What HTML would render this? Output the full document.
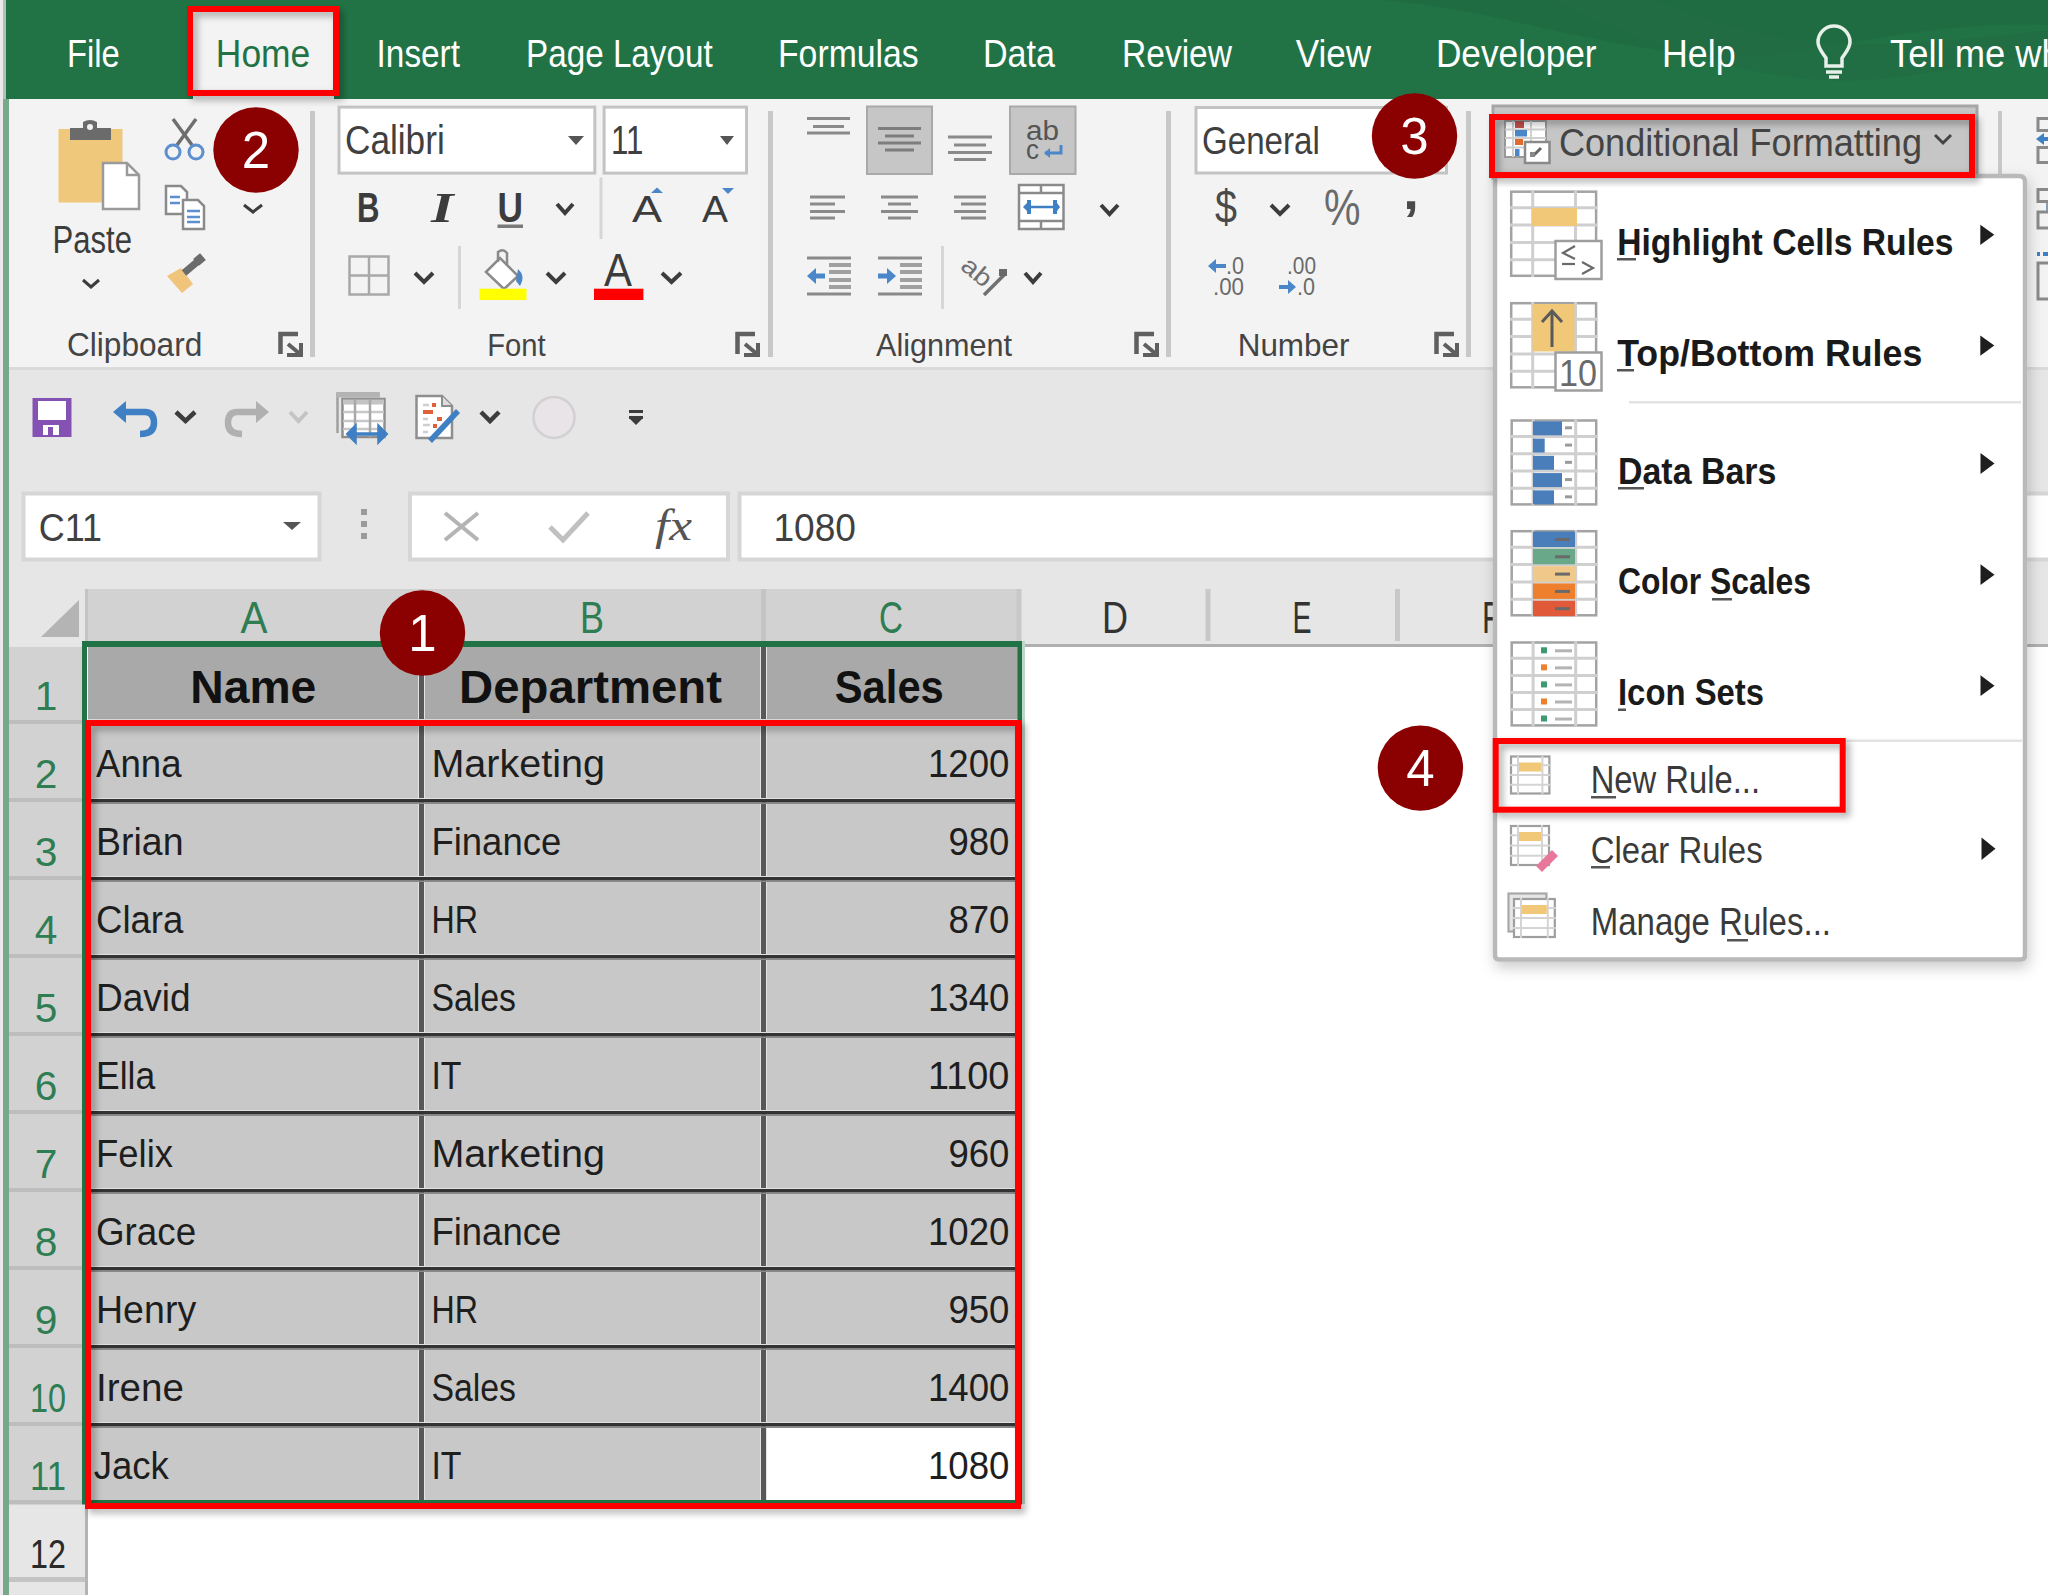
<!DOCTYPE html><html><head><meta charset="utf-8"><style>html,body{margin:0;padding:0;background:#fff;overflow:hidden}</style></head><body><svg width="2048" height="1595" viewBox="0 0 2048 1595" style="display:block;font-family:'Liberation Sans', sans-serif">
<defs>
<filter id="sh" x="-10%" y="-10%" width="130%" height="130%"><feDropShadow dx="4" dy="4" stdDeviation="3.5" flood-color="#000" flood-opacity="0.33"/></filter>
<filter id="sh2" x="-10%" y="-10%" width="130%" height="130%"><feDropShadow dx="2" dy="6" stdDeviation="7" flood-color="#000" flood-opacity="0.2"/></filter>
</defs>
<rect x="0" y="0" width="2048" height="1595" fill="#ffffff" />
<rect x="0" y="0" width="2048" height="99" fill="#217346" />
<path d="M1380 0 C1500 10 1560 40 1700 55 C1800 65 1900 20 2048 25 L2048 0 Z" fill="#1f6b41" opacity="0.9"/>
<path d="M1550 0 C1620 30 1700 70 1820 80 C1900 85 1980 60 2048 55 L2048 30 C1960 40 1880 50 1800 40 C1720 30 1660 0 1650 0 Z" fill="#226d44" opacity="0.8"/>
<text x="67" y="67" font-size="38.5" fill="#ffffff" textLength="52.8" lengthAdjust="spacingAndGlyphs" >File</text>
<text x="376.6" y="67" font-size="38.5" fill="#ffffff" textLength="83.4" lengthAdjust="spacingAndGlyphs" >Insert</text>
<text x="526" y="67" font-size="38.5" fill="#ffffff" textLength="186.7" lengthAdjust="spacingAndGlyphs" >Page Layout</text>
<text x="778" y="67" font-size="38.5" fill="#ffffff" textLength="140.7" lengthAdjust="spacingAndGlyphs" >Formulas</text>
<text x="983" y="67" font-size="38.5" fill="#ffffff" textLength="72" lengthAdjust="spacingAndGlyphs" >Data</text>
<text x="1122" y="67" font-size="38.5" fill="#ffffff" textLength="110" lengthAdjust="spacingAndGlyphs" >Review</text>
<text x="1295.7" y="67" font-size="38.5" fill="#ffffff" textLength="75.3" lengthAdjust="spacingAndGlyphs" >View</text>
<text x="1435.9" y="67" font-size="38.5" fill="#ffffff" textLength="160.7" lengthAdjust="spacingAndGlyphs" >Developer</text>
<text x="1662" y="67" font-size="38.5" fill="#ffffff" textLength="73.6" lengthAdjust="spacingAndGlyphs" >Help</text>
<text transform="translate(1890 67) scale(0.945 1)" x="0" y="0" font-size="38.5" fill="#ffffff">Tell me what you want to do</text>
<g fill="none" stroke="#e8f0ea" stroke-width="3.5"><path d="M1826 66 L1826 58 C1822 52 1818 48 1818 42 A16 16 0 1 1 1850 42 C1850 48 1846 52 1842 58 L1842 66 Z"/><line x1="1826" y1="72" x2="1842" y2="72"/><line x1="1829" y1="77" x2="1839" y2="77"/></g>
<rect x="0" y="0" width="3" height="1595" fill="#ebe7eb" />
<rect x="3" y="99" width="6" height="1496" fill="#78a88a" />
<rect x="3" y="0" width="3" height="99" fill="#a8c4b4" />
<rect x="9" y="99" width="2039" height="270" fill="#f3f3f3" />
<rect x="9" y="367" width="2039" height="3" fill="#dadada" />
<rect x="9" y="370" width="2039" height="220" fill="#e6e6e6" />
<rect x="193" y="12" width="141" height="88" fill="#f3f3f3" />
<rect x="190" y="9" width="146" height="84" fill="none" stroke="#ff0000" stroke-width="6" filter="url(#sh)"/>
<text x="215.8" y="67" font-size="38.5" fill="#217346" textLength="94.5" lengthAdjust="spacingAndGlyphs" >Home</text>
<rect x="58.5" y="129" width="64" height="73.5" fill="#f0c87c" />
<path d="M70 140 L70 128 L83 128 L83 122 Q90 118 97 122 L97 128 L111 128 L111 140 Z" fill="#6b6b6b"/>
<circle cx="90" cy="127" r="3" fill="#f3f3f3"/>
<path d="M103 163 L127 163 L139 175 L139 209 L103 209 Z" fill="#ffffff" stroke="#9a9a9a" stroke-width="2.5"/>
<path d="M127 163 L127 175 L139 175" fill="none" stroke="#9a9a9a" stroke-width="2.5"/>
<text x="52.5" y="253" font-size="39.2" fill="#3c3c3c" textLength="79.5" lengthAdjust="spacingAndGlyphs" >Paste</text>
<path d="M83 280 L91 287 L99 280" fill="none" stroke="#3c3c3c" stroke-width="3"/>
<g fill="none" stroke="#6e6e6e" stroke-width="3.5"><line x1="173" y1="119" x2="192" y2="145"/><line x1="196" y1="119" x2="177" y2="145"/></g>
<g fill="none" stroke="#5b8fd0" stroke-width="3"><circle cx="173" cy="152" r="7"/><circle cx="196" cy="152" r="7"/></g>
<g stroke="#8a8a8a" stroke-width="2.5" fill="#fff"><path d="M166 186 L181 186 L187 192 L187 214 L166 214 Z"/><path d="M183 200 L198 200 L204 206 L204 229 L183 229 Z"/></g>
<g stroke="#5b8fd0" stroke-width="2.5"><line x1="170" y1="197" x2="180" y2="197"/><line x1="170" y1="203" x2="180" y2="203"/><line x1="187" y1="211" x2="200" y2="211"/><line x1="187" y1="217" x2="200" y2="217"/><line x1="187" y1="222" x2="200" y2="222"/></g>
<path d="M244 205 L253 212 L262 205" fill="none" stroke="#3c3c3c" stroke-width="3"/>
<path d="M167 276 L181 268 L193 284 L182 293 Z" fill="#f0c47a"/>
<line x1="184" y1="273" x2="197" y2="262" stroke="#6b6b6b" stroke-width="7"/><rect x="195" y="255" width="9" height="9" fill="#6b6b6b" transform="rotate(-40 199.5 259.5)"/>
<text x="66.9" y="356" font-size="33.4" fill="#444444" textLength="135.4" lengthAdjust="spacingAndGlyphs" >Clipboard</text>
<g fill="none" stroke="#5f5f5f" stroke-width="4.5"><path d="M280.5 354 L280.5 334 L298 334"/><line x1="288" y1="344" x2="300" y2="354" stroke-width="4"/><path d="M301 343 L301 355 L287 355" stroke-width="4"/></g>
<rect x="310" y="111" width="5" height="246" fill="#c8c8c8" />
<rect x="339.0" y="107.1" width="255.79999999999995" height="66.0" fill="#ffffff" stroke="#c3c3c3" stroke-width="3"/>
<text x="345" y="154" font-size="40.0" fill="#404040" textLength="99.7" lengthAdjust="spacingAndGlyphs" >Calibri</text>
<path d="M568 136 L584 136 L576 145 Z" fill="#555"/>
<rect x="604.1" y="107.1" width="142.39999999999998" height="66.0" fill="#ffffff" stroke="#c3c3c3" stroke-width="3"/>
<text x="611" y="154" font-size="40.0" fill="#404040" textLength="32.5" lengthAdjust="spacingAndGlyphs" >11</text>
<path d="M720 136 L734 136 L727 145 Z" fill="#555"/>
<text x="357" y="222.4" font-size="42.7" fill="#3c3c3c" textLength="22.5" lengthAdjust="spacingAndGlyphs" font-weight="bold" >B</text>
<text x="431" y="222.4" font-size="43" fill="#3c3c3c" font-family="Liberation Serif" font-style="italic" font-weight="bold" textLength="22.6" lengthAdjust="spacingAndGlyphs">I</text>
<text x="497.5" y="222.4" font-size="42.7" fill="#3c3c3c" textLength="25.5" lengthAdjust="spacingAndGlyphs" font-weight="bold" >U</text>
<rect x="497.5" y="224.5" width="25.5" height="3.5" fill="#7a7a7a" />
<path d="M557 204 L565.0 213 L573 204" fill="none" stroke="#3c3c3c" stroke-width="4"/>
<rect x="599.5" y="177.5" width="3" height="61.5" fill="#d6d6d6" />
<text x="632" y="222.4" font-size="37.5" fill="#3c3c3c" textLength="30" lengthAdjust="spacingAndGlyphs" >A</text>
<path d="M651 193 L657 187.6 L663 193 Z" fill="#4a86c8"/>
<text x="702" y="222.4" font-size="37.5" fill="#3c3c3c" textLength="26" lengthAdjust="spacingAndGlyphs" >A</text>
<path d="M722 188 L734 188 L728 194 Z" fill="#4a86c8"/>
<g fill="none" stroke="#a8a8a8" stroke-width="2.5"><rect x="349.5" y="256.5" width="39" height="38"/><line x1="369" y1="256" x2="369" y2="295"/><line x1="349" y1="275.5" x2="389" y2="275.5"/></g>
<path d="M415 273 L424.0 282 L433 273" fill="none" stroke="#3c3c3c" stroke-width="4"/>
<rect x="458" y="246" width="3" height="63" fill="#d6d6d6" />
<path d="M486 272 L500 258 L518 276 L504 289 Z" fill="#fff" stroke="#8a8a8a" stroke-width="2.5"/>
<path d="M498 262 L498 252 Q503 248 507 253 L507 266" fill="none" stroke="#8a8a8a" stroke-width="2.5"/>
<path d="M518 269 Q526 276 520 286 L516 281 Z" fill="#4a86c8"/>
<rect x="479.5" y="288.7" width="47" height="11.3" fill="#ffff00" />
<path d="M547 273 L556.0 282 L565 273" fill="none" stroke="#3c3c3c" stroke-width="4"/>
<text x="604" y="286.4" font-size="45.6" fill="#3c3c3c" textLength="28" lengthAdjust="spacingAndGlyphs" >A</text>
<rect x="594" y="288.7" width="49.4" height="11.3" fill="#ff0000" />
<path d="M662 273 L671.5 282 L681 273" fill="none" stroke="#3c3c3c" stroke-width="4"/>
<text x="487.3" y="356" font-size="31.0" fill="#444444" textLength="58.4" lengthAdjust="spacingAndGlyphs" >Font</text>
<g fill="none" stroke="#5f5f5f" stroke-width="4.5"><path d="M737.5 354 L737.5 334 L755 334"/><line x1="745" y1="344" x2="757" y2="354" stroke-width="4"/><path d="M758 343 L758 355 L744 355" stroke-width="4"/></g>
<rect x="768" y="111" width="5" height="246" fill="#c8c8c8" />
<line x1="807" y1="118.5" x2="850" y2="118.5" stroke="#8a8a8a" stroke-width="3"/>
<line x1="813" y1="126.5" x2="844" y2="126.5" stroke="#8a8a8a" stroke-width="3"/>
<line x1="807" y1="133" x2="850" y2="133" stroke="#8a8a8a" stroke-width="3"/>
<rect x="867" y="106.5" width="65" height="67.5" fill="#c6c6c6" stroke="#a9a9a9" stroke-width="2"/>
<line x1="878" y1="128.5" x2="921" y2="128.5" stroke="#7d7d7d" stroke-width="3"/>
<line x1="885" y1="136" x2="914" y2="136" stroke="#7d7d7d" stroke-width="3"/>
<line x1="878" y1="143" x2="921" y2="143" stroke="#7d7d7d" stroke-width="3"/>
<line x1="885" y1="150" x2="914" y2="150" stroke="#7d7d7d" stroke-width="3"/>
<line x1="948" y1="137" x2="992" y2="137" stroke="#8a8a8a" stroke-width="3"/>
<line x1="954" y1="145" x2="986" y2="145" stroke="#8a8a8a" stroke-width="3"/>
<line x1="948" y1="152.5" x2="992" y2="152.5" stroke="#8a8a8a" stroke-width="3"/>
<line x1="954" y1="159.5" x2="986" y2="159.5" stroke="#8a8a8a" stroke-width="3"/>
<rect x="1010" y="106.5" width="65.5" height="67.5" fill="#c6c6c6" stroke="#a9a9a9" stroke-width="2"/>
<text x="1026" y="140" font-size="27" fill="#555" textLength="33" lengthAdjust="spacingAndGlyphs" >ab</text>
<text x="1026" y="159" font-size="27" fill="#555" textLength="13" lengthAdjust="spacingAndGlyphs" >c</text>
<path d="M1061 145 L1061 153 L1045 153" fill="none" stroke="#4a86c8" stroke-width="3"/><path d="M1044 153 L1050 148 L1050 158 Z" fill="#4a86c8"/>
<line x1="810" y1="197" x2="845" y2="197" stroke="#8a8a8a" stroke-width="3"/>
<line x1="810" y1="204" x2="835" y2="204" stroke="#8a8a8a" stroke-width="3"/>
<line x1="810" y1="211.5" x2="845" y2="211.5" stroke="#8a8a8a" stroke-width="3"/>
<line x1="810" y1="218" x2="835" y2="218" stroke="#8a8a8a" stroke-width="3"/>
<line x1="881" y1="197" x2="918" y2="197" stroke="#8a8a8a" stroke-width="3"/>
<line x1="888" y1="204" x2="911" y2="204" stroke="#8a8a8a" stroke-width="3"/>
<line x1="881" y1="211.5" x2="918" y2="211.5" stroke="#8a8a8a" stroke-width="3"/>
<line x1="888" y1="218" x2="911" y2="218" stroke="#8a8a8a" stroke-width="3"/>
<line x1="954" y1="197" x2="986" y2="197" stroke="#8a8a8a" stroke-width="3"/>
<line x1="961" y1="204" x2="986" y2="204" stroke="#8a8a8a" stroke-width="3"/>
<line x1="954" y1="211.5" x2="986" y2="211.5" stroke="#8a8a8a" stroke-width="3"/>
<line x1="961" y1="218" x2="986" y2="218" stroke="#8a8a8a" stroke-width="3"/>
<rect x="1019" y="185" width="44.5" height="44" fill="#fff"/>
<g fill="none" stroke="#8a8a8a" stroke-width="2.5"><rect x="1019" y="185" width="44.5" height="44"/><line x1="1019" y1="193" x2="1063" y2="193"/><line x1="1019" y1="221" x2="1063" y2="221"/><line x1="1041" y1="185" x2="1041" y2="193"/><line x1="1041" y1="221" x2="1041" y2="229"/></g>
<g stroke="#3f7fc4" fill="#3f7fc4"><line x1="1025" y1="207" x2="1058" y2="207" stroke-width="2.5"/><rect x="1027" y="200" width="4" height="14" stroke="none"/><rect x="1053" y="200" width="4" height="14" stroke="none"/><path d="M1023 207 L1027 203 L1027 211 Z" stroke="none"/><path d="M1060 207 L1057 203 L1057 211 Z" stroke="none"/></g>
<path d="M1101 205 L1109.5 214 L1118 205" fill="none" stroke="#3c3c3c" stroke-width="4"/>
<line x1="807" y1="258" x2="851" y2="258" stroke="#8a8a8a" stroke-width="3"/>
<line x1="807" y1="294" x2="851" y2="294" stroke="#8a8a8a" stroke-width="3"/>
<line x1="829" y1="265" x2="851" y2="265" stroke="#a0a0a0" stroke-width="4"/>
<line x1="829" y1="272" x2="851" y2="272" stroke="#a0a0a0" stroke-width="4"/>
<line x1="829" y1="280" x2="851" y2="280" stroke="#a0a0a0" stroke-width="4"/>
<line x1="829" y1="287" x2="851" y2="287" stroke="#a0a0a0" stroke-width="4"/>
<path d="M813 276 L825 276" stroke="#4a86c8" stroke-width="5"/><path d="M807 276 L816 268 L816 284 Z" fill="#4a86c8"/>
<line x1="878" y1="258" x2="922" y2="258" stroke="#8a8a8a" stroke-width="3"/>
<line x1="878" y1="294" x2="922" y2="294" stroke="#8a8a8a" stroke-width="3"/>
<line x1="900" y1="265" x2="922" y2="265" stroke="#a0a0a0" stroke-width="4"/>
<line x1="900" y1="272" x2="922" y2="272" stroke="#a0a0a0" stroke-width="4"/>
<line x1="900" y1="280" x2="922" y2="280" stroke="#a0a0a0" stroke-width="4"/>
<line x1="900" y1="287" x2="922" y2="287" stroke="#a0a0a0" stroke-width="4"/>
<path d="M878 276 L890 276" stroke="#4a86c8" stroke-width="5"/><path d="M896 276 L887 268 L887 284 Z" fill="#4a86c8"/>
<rect x="941" y="246" width="3" height="63" fill="#d6d6d6" />
<g transform="translate(978 272) rotate(40)"><text x="-17" y="9" font-size="25" fill="#707070" textLength="32" lengthAdjust="spacingAndGlyphs">ab</text></g>
<line x1="984" y1="295" x2="1005" y2="274" stroke="#707070" stroke-width="3.5"/><rect x="999" y="269" width="8" height="7" fill="#6a6a6a"/>
<path d="M1025 273 L1033.0 282 L1041 273" fill="none" stroke="#3c3c3c" stroke-width="4"/>
<text x="876" y="356" font-size="32.0" fill="#444444" textLength="136" lengthAdjust="spacingAndGlyphs" >Alignment</text>
<g fill="none" stroke="#5f5f5f" stroke-width="4.5"><path d="M1136.5 354 L1136.5 334 L1154 334"/><line x1="1144" y1="344" x2="1156" y2="354" stroke-width="4"/><path d="M1157 343 L1157 355 L1143 355" stroke-width="4"/></g>
<rect x="1166" y="111" width="5" height="246" fill="#c8c8c8" />
<rect x="1196.0" y="107.5" width="250.5" height="65.5" fill="#ffffff" stroke="#c3c3c3" stroke-width="3"/>
<text x="1202" y="154" font-size="39.2" fill="#404040" textLength="117.8" lengthAdjust="spacingAndGlyphs" >General</text>
<text x="1215" y="223" font-size="46.5" fill="#4a4a4a" textLength="22" lengthAdjust="spacingAndGlyphs" >$</text>
<path d="M1271 205 L1280.0 214 L1289 205" fill="none" stroke="#3c3c3c" stroke-width="4"/>
<text x="1324" y="225" font-size="50.4" fill="#6a6a6a" textLength="36.5" lengthAdjust="spacingAndGlyphs" >%</text>
<text x="1403" y="209" font-size="52" fill="#4a4a4a" textLength="16" lengthAdjust="spacingAndGlyphs" font-weight="bold" >,</text>
<text x="1226" y="274" font-size="24" fill="#6a6a6a" textLength="18" lengthAdjust="spacingAndGlyphs" >.0</text>
<text x="1213" y="295" font-size="24" fill="#6a6a6a" textLength="31" lengthAdjust="spacingAndGlyphs" >.00</text>
<path d="M1210 266 L1226 266" stroke="#4a86c8" stroke-width="4"/><path d="M1208 266 L1216 259 L1216 273 Z" fill="#4a86c8"/>
<text x="1287" y="274" font-size="24" fill="#6a6a6a" textLength="29" lengthAdjust="spacingAndGlyphs" >.00</text>
<text x="1297" y="295" font-size="24" fill="#6a6a6a" textLength="18" lengthAdjust="spacingAndGlyphs" >.0</text>
<path d="M1279 287 L1293 287" stroke="#4a86c8" stroke-width="4"/><path d="M1296 287 L1288 280 L1288 294 Z" fill="#4a86c8"/>
<text x="1237.7" y="356" font-size="32.0" fill="#444444" textLength="111.8" lengthAdjust="spacingAndGlyphs" >Number</text>
<g fill="none" stroke="#5f5f5f" stroke-width="4.5"><path d="M1436.5 354 L1436.5 334 L1454 334"/><line x1="1444" y1="344" x2="1456" y2="354" stroke-width="4"/><path d="M1457 343 L1457 355 L1443 355" stroke-width="4"/></g>
<rect x="1466" y="111" width="5" height="246" fill="#c8c8c8" />
<g fill="none" stroke="#8a8a8a" stroke-width="3"><rect x="2038" y="118.5" width="20" height="12"/><rect x="2038" y="147.5" width="20" height="15"/><rect x="2038" y="189.5" width="20" height="12"/><rect x="2038" y="212" width="20" height="16"/><rect x="2038" y="263" width="20" height="36"/></g>
<g fill="#3f7fc4"><path d="M2036 139 L2044 133 L2044 145 Z"/><rect x="2042" y="137" width="8" height="4"/><rect x="2037" y="252" width="3" height="4"/><rect x="2043" y="252" width="6" height="4"/></g><rect x="2046" y="203" width="4" height="8" fill="#8a9ab0"/>
<rect x="1998" y="111" width="4" height="64" fill="#c8c8c8" />
<rect x="32.5" y="398" width="39" height="39" fill="#8352b3"/><rect x="38" y="401" width="28" height="19" fill="#fff"/><rect x="43" y="425" width="16" height="10" fill="#fff"/><rect x="48" y="427" width="5" height="8" fill="#8352b3"/>
<path d="M122 412 L145 412 Q154 412 154 423 Q154 434 140 434" fill="none" stroke="#3f7fc4" stroke-width="6.5"/><path d="M113 412 L126 401 L126 423 Z" fill="#3f7fc4"/>
<path d="M176 412 L185.5 421 L195 412" fill="none" stroke="#3c3c3c" stroke-width="4.5"/>
<path d="M260 412 L237 412 Q228 412 228 423 Q228 434 242 434" fill="none" stroke="#b0b0b0" stroke-width="6.5"/><path d="M269 412 L256 401 L256 423 Z" fill="#b0b0b0"/>
<path d="M290 412 L298.5 421 L307 412" fill="none" stroke="#c4c4c4" stroke-width="4"/>
<path d="M337.5 433 L337.5 393.5 L379.5 393.5" fill="none" stroke="#a0a0a0" stroke-width="2.5"/><rect x="337" y="392.5" width="43" height="5" fill="#b4b4b4"/>
<rect x="342.5" y="399" width="42" height="38" fill="#fff" stroke="#8e8e8e" stroke-width="2.5"/>
<rect x="343" y="399.5" width="41" height="5" fill="#c4c4c4"/>
<g stroke="#c8c8c8" stroke-width="2.5"><line x1="343" y1="412" x2="384" y2="412"/><line x1="343" y1="421" x2="384" y2="421"/><line x1="343" y1="429" x2="384" y2="429"/></g><g stroke="#a8a8a8" stroke-width="2.5"><line x1="355" y1="399" x2="355" y2="437"/><line x1="370" y1="399" x2="370" y2="437"/></g>
<g stroke="#3f7fc4" fill="#3f7fc4" stroke-width="3.5"><line x1="352" y1="434" x2="379" y2="434"/><path d="M348 434 L355 427 L355 441 Z"/><path d="M386 434 L379 427 L379 441 Z"/></g>
<path d="M416.5 396 L442 396 L452 406 L452 438 L416.5 438 Z" fill="#fff" stroke="#8e8e8e" stroke-width="2.5"/><path d="M442 396 L442 406 L452 406" fill="#ddd" stroke="#8e8e8e" stroke-width="2"/>
<g stroke="#cfcfcf" stroke-width="2.5"><line x1="423" y1="405" x2="429" y2="405"/><line x1="423" y1="419" x2="428" y2="419"/><line x1="423" y1="425" x2="430" y2="425"/><line x1="423" y1="432" x2="428" y2="432"/></g>
<g fill="#e0603a"><rect x="432" y="403" width="4" height="4"/><rect x="423" y="410" width="10" height="4"/><rect x="437" y="417" width="5" height="4"/><rect x="433" y="424" width="4" height="4"/></g>
<line x1="430" y1="441" x2="458" y2="411" stroke="#3f7fc4" stroke-width="5.5"/>
<path d="M481 412 L490.0 421 L499 412" fill="none" stroke="#3c3c3c" stroke-width="4.5"/>
<circle cx="554" cy="417.4" r="20.5" fill="#e8e4e8" stroke="#d2d0d2" stroke-width="2.5"/>
<g fill="#3c3c3c"><rect x="629" y="410" width="14" height="3"/><rect x="629" y="416" width="14" height="3"/><path d="M630 419 L642 419 L636 425 Z"/></g>
<rect x="23.5" y="493.5" width="296" height="66" fill="#ffffff" stroke="#d6d6d6" stroke-width="4"/>
<text x="38.7" y="541" font-size="39.2" fill="#404040" textLength="63.3" lengthAdjust="spacingAndGlyphs" >C11</text>
<path d="M283 522 L301 522 L292 530 Z" fill="#555"/>
<g fill="#9a9a9a"><rect x="361" y="509" width="6" height="6"/><rect x="361" y="521" width="6" height="6"/><rect x="361" y="533" width="6" height="6"/></g>
<rect x="410" y="493.5" width="318" height="66" fill="#ffffff" stroke="#d6d6d6" stroke-width="4"/>
<g stroke="#b4b4b4" stroke-width="4"><line x1="445" y1="513" x2="478" y2="540"/><line x1="478" y1="513" x2="445" y2="540"/></g>
<path d="M550 527 L563 540 L588 513" fill="none" stroke="#c0c0c0" stroke-width="5"/>
<text x="655" y="540" font-size="44" fill="#555" font-family="Liberation Serif" font-style="italic" textLength="37" lengthAdjust="spacingAndGlyphs">fx</text>
<rect x="739.5" y="493.5" width="1320" height="66" fill="#ffffff" stroke="#d6d6d6" stroke-width="4"/>
<text x="773.4" y="541" font-size="39.2" fill="#404040" textLength="82.6" lengthAdjust="spacingAndGlyphs" >1080</text>
<rect x="9" y="589" width="2039" height="56" fill="#e6e6e6" />
<rect x="88" y="589" width="933" height="52" fill="#d2d2d2" />
<rect x="9" y="644" width="2039" height="3" fill="#afafaf" />
<path d="M41 637 L79 637 L79 600 Z" fill="#b4b4b4"/>
<rect x="419" y="589" width="5" height="52" fill="#c4c4c4" />
<rect x="761" y="589" width="5" height="52" fill="#c4c4c4" />
<rect x="1016.5" y="589" width="5" height="52" fill="#c8c8c8" />
<rect x="1205.5" y="589" width="5" height="52" fill="#c8c8c8" />
<rect x="1395" y="589" width="5" height="52" fill="#c8c8c8" />
<rect x="85" y="589" width="3" height="56" fill="#c4c4c4" />
<text x="254" y="633" font-size="43.6" fill="#2f7d52" textLength="27" lengthAdjust="spacingAndGlyphs" text-anchor="middle" >A</text>
<text x="592" y="633" font-size="43.6" fill="#2f7d52" textLength="24" lengthAdjust="spacingAndGlyphs" text-anchor="middle" >B</text>
<text x="891" y="633" font-size="43.6" fill="#2f7d52" textLength="24" lengthAdjust="spacingAndGlyphs" text-anchor="middle" >C</text>
<text x="1115" y="633" font-size="43.6" fill="#333333" textLength="26" lengthAdjust="spacingAndGlyphs" text-anchor="middle" >D</text>
<text x="1302" y="633" font-size="43.6" fill="#333333" textLength="19" lengthAdjust="spacingAndGlyphs" text-anchor="middle" >E</text>
<text x="1482" y="633" font-size="43.6" fill="#333333" textLength="19" lengthAdjust="spacingAndGlyphs" >F</text>
<rect x="9" y="644" width="76" height="951" fill="#e6e6e6" />
<rect x="9" y="647" width="73" height="858" fill="#d2d2d2" />
<rect x="85" y="1505" width="3" height="90" fill="#b4b4b4" />
<rect x="9" y="720" width="73" height="4" fill="#bdbdbd" />
<rect x="9" y="798" width="73" height="4" fill="#bdbdbd" />
<rect x="9" y="876" width="73" height="4" fill="#bdbdbd" />
<rect x="9" y="954" width="73" height="4" fill="#bdbdbd" />
<rect x="9" y="1032" width="73" height="4" fill="#bdbdbd" />
<rect x="9" y="1110" width="73" height="4" fill="#bdbdbd" />
<rect x="9" y="1188" width="73" height="4" fill="#bdbdbd" />
<rect x="9" y="1266" width="73" height="4" fill="#bdbdbd" />
<rect x="9" y="1344" width="73" height="4" fill="#bdbdbd" />
<rect x="9" y="1422" width="73" height="4" fill="#bdbdbd" />
<rect x="9" y="1500" width="73" height="4" fill="#bdbdbd" />
<rect x="9" y="1577" width="76" height="5" fill="#c4c4c4" />
<text x="46" y="710" font-size="40.7" fill="#2f7d52" text-anchor="middle" >1</text>
<text x="46" y="788" font-size="40.7" fill="#2f7d52" text-anchor="middle" >2</text>
<text x="46" y="866" font-size="40.7" fill="#2f7d52" text-anchor="middle" >3</text>
<text x="46" y="944" font-size="40.7" fill="#2f7d52" text-anchor="middle" >4</text>
<text x="46" y="1022" font-size="40.7" fill="#2f7d52" text-anchor="middle" >5</text>
<text x="46" y="1100" font-size="40.7" fill="#2f7d52" text-anchor="middle" >6</text>
<text x="46" y="1178" font-size="40.7" fill="#2f7d52" text-anchor="middle" >7</text>
<text x="46" y="1256" font-size="40.7" fill="#2f7d52" text-anchor="middle" >8</text>
<text x="46" y="1334" font-size="40.7" fill="#2f7d52" text-anchor="middle" >9</text>
<text x="48" y="1412" font-size="40.7" fill="#2f7d52" textLength="36" lengthAdjust="spacingAndGlyphs" text-anchor="middle" >10</text>
<text x="48" y="1490" font-size="40.7" fill="#2f7d52" textLength="36" lengthAdjust="spacingAndGlyphs" text-anchor="middle" >11</text>
<text x="48" y="1568" font-size="40.7" fill="#2a2a2a" textLength="36" lengthAdjust="spacingAndGlyphs" text-anchor="middle" >12</text>
<rect x="88" y="647" width="930" height="74" fill="#a9a9a9" />
<rect x="88" y="721" width="930" height="780" fill="#c8c8c8" />
<rect x="766" y="1427" width="250" height="74" fill="#ffffff" />
<rect x="418" y="647" width="7" height="854" fill="#e4e4e4" />
<rect x="419" y="647" width="5" height="854" fill="#585858" />
<rect x="760" y="647" width="7" height="854" fill="#e4e4e4" />
<rect x="761" y="647" width="5" height="854" fill="#585858" />
<rect x="88" y="798" width="930" height="2" fill="#e0e0e0" />
<rect x="88" y="799" width="930" height="3.5" fill="#333333" />
<rect x="88" y="802.5" width="930" height="1.5" fill="#8a8a8a" />
<rect x="88" y="876" width="930" height="2" fill="#e0e0e0" />
<rect x="88" y="877" width="930" height="3.5" fill="#333333" />
<rect x="88" y="880.5" width="930" height="1.5" fill="#8a8a8a" />
<rect x="88" y="954" width="930" height="2" fill="#e0e0e0" />
<rect x="88" y="955" width="930" height="3.5" fill="#333333" />
<rect x="88" y="958.5" width="930" height="1.5" fill="#8a8a8a" />
<rect x="88" y="1032" width="930" height="2" fill="#e0e0e0" />
<rect x="88" y="1033" width="930" height="3.5" fill="#333333" />
<rect x="88" y="1036.5" width="930" height="1.5" fill="#8a8a8a" />
<rect x="88" y="1110" width="930" height="2" fill="#e0e0e0" />
<rect x="88" y="1111" width="930" height="3.5" fill="#333333" />
<rect x="88" y="1114.5" width="930" height="1.5" fill="#8a8a8a" />
<rect x="88" y="1188" width="930" height="2" fill="#e0e0e0" />
<rect x="88" y="1189" width="930" height="3.5" fill="#333333" />
<rect x="88" y="1192.5" width="930" height="1.5" fill="#8a8a8a" />
<rect x="88" y="1266" width="930" height="2" fill="#e0e0e0" />
<rect x="88" y="1267" width="930" height="3.5" fill="#333333" />
<rect x="88" y="1270.5" width="930" height="1.5" fill="#8a8a8a" />
<rect x="88" y="1344" width="930" height="2" fill="#e0e0e0" />
<rect x="88" y="1345" width="930" height="3.5" fill="#333333" />
<rect x="88" y="1348.5" width="930" height="1.5" fill="#8a8a8a" />
<rect x="88" y="1422" width="930" height="2" fill="#e0e0e0" />
<rect x="88" y="1423" width="930" height="3.5" fill="#333333" />
<rect x="88" y="1426.5" width="930" height="1.5" fill="#8a8a8a" />
<rect x="88" y="719" width="930" height="2" fill="#e0e0e0" />
<text x="96" y="777" font-size="39.2" fill="#1e1e1e" textLength="85.6" lengthAdjust="spacingAndGlyphs" >Anna</text>
<text x="431.4" y="777" font-size="39.2" fill="#1e1e1e" textLength="173.6" lengthAdjust="spacingAndGlyphs" >Marketing</text>
<text x="927.9" y="777" font-size="39.2" fill="#1e1e1e" textLength="81.5" lengthAdjust="spacingAndGlyphs" >1200</text>
<text x="96" y="855" font-size="39.2" fill="#1e1e1e" textLength="87.5" lengthAdjust="spacingAndGlyphs" >Brian</text>
<text x="431.4" y="855" font-size="39.2" fill="#1e1e1e" textLength="129.9" lengthAdjust="spacingAndGlyphs" >Finance</text>
<text x="948.4" y="855" font-size="39.2" fill="#1e1e1e" textLength="61" lengthAdjust="spacingAndGlyphs" >980</text>
<text x="96" y="933" font-size="39.2" fill="#1e1e1e" textLength="87.4" lengthAdjust="spacingAndGlyphs" >Clara</text>
<text x="431.4" y="933" font-size="39.2" fill="#1e1e1e" textLength="46.5" lengthAdjust="spacingAndGlyphs" >HR</text>
<text x="948.4" y="933" font-size="39.2" fill="#1e1e1e" textLength="61" lengthAdjust="spacingAndGlyphs" >870</text>
<text x="96" y="1011" font-size="39.2" fill="#1e1e1e" textLength="94.7" lengthAdjust="spacingAndGlyphs" >David</text>
<text x="431.4" y="1011" font-size="39.2" fill="#1e1e1e" textLength="84.6" lengthAdjust="spacingAndGlyphs" >Sales</text>
<text x="927.9" y="1011" font-size="39.2" fill="#1e1e1e" textLength="81.5" lengthAdjust="spacingAndGlyphs" >1340</text>
<text x="96" y="1089" font-size="39.2" fill="#1e1e1e" textLength="59.2" lengthAdjust="spacingAndGlyphs" >Ella</text>
<text x="431.4" y="1089" font-size="39.2" fill="#1e1e1e" textLength="30.1" lengthAdjust="spacingAndGlyphs" >IT</text>
<text x="927.9" y="1089" font-size="39.2" fill="#1e1e1e" textLength="81.5" lengthAdjust="spacingAndGlyphs" >1100</text>
<text x="96" y="1167" font-size="39.2" fill="#1e1e1e" textLength="77" lengthAdjust="spacingAndGlyphs" >Felix</text>
<text x="431.4" y="1167" font-size="39.2" fill="#1e1e1e" textLength="173.6" lengthAdjust="spacingAndGlyphs" >Marketing</text>
<text x="948.4" y="1167" font-size="39.2" fill="#1e1e1e" textLength="61" lengthAdjust="spacingAndGlyphs" >960</text>
<text x="96" y="1245" font-size="39.2" fill="#1e1e1e" textLength="100.2" lengthAdjust="spacingAndGlyphs" >Grace</text>
<text x="431.4" y="1245" font-size="39.2" fill="#1e1e1e" textLength="129.9" lengthAdjust="spacingAndGlyphs" >Finance</text>
<text x="927.9" y="1245" font-size="39.2" fill="#1e1e1e" textLength="81.5" lengthAdjust="spacingAndGlyphs" >1020</text>
<text x="96" y="1323" font-size="39.2" fill="#1e1e1e" textLength="100.2" lengthAdjust="spacingAndGlyphs" >Henry</text>
<text x="431.4" y="1323" font-size="39.2" fill="#1e1e1e" textLength="46.5" lengthAdjust="spacingAndGlyphs" >HR</text>
<text x="948.4" y="1323" font-size="39.2" fill="#1e1e1e" textLength="61" lengthAdjust="spacingAndGlyphs" >950</text>
<text x="96" y="1401" font-size="39.2" fill="#1e1e1e" textLength="87.9" lengthAdjust="spacingAndGlyphs" >Irene</text>
<text x="431.4" y="1401" font-size="39.2" fill="#1e1e1e" textLength="84.6" lengthAdjust="spacingAndGlyphs" >Sales</text>
<text x="927.9" y="1401" font-size="39.2" fill="#1e1e1e" textLength="81.5" lengthAdjust="spacingAndGlyphs" >1400</text>
<text x="93.7" y="1479" font-size="39.2" fill="#1e1e1e" textLength="75.2" lengthAdjust="spacingAndGlyphs" >Jack</text>
<text x="431.4" y="1479" font-size="39.2" fill="#1e1e1e" textLength="30.1" lengthAdjust="spacingAndGlyphs" >IT</text>
<text x="927.9" y="1479" font-size="39.2" fill="#1e1e1e" textLength="81.5" lengthAdjust="spacingAndGlyphs" >1080</text>
<text x="190.3" y="702.7" font-size="46.5" fill="#111111" textLength="126" lengthAdjust="spacingAndGlyphs" font-weight="bold" >Name</text>
<text x="459" y="702.7" font-size="46.5" fill="#111111" textLength="263" lengthAdjust="spacingAndGlyphs" font-weight="bold" >Department</text>
<text x="834.8" y="702.7" font-size="46.5" fill="#111111" textLength="109" lengthAdjust="spacingAndGlyphs" font-weight="bold" >Sales</text>
<rect x="82" y="641" width="6" height="6" fill="#217346" />
<rect x="82" y="641" width="940" height="6" fill="#217346" />
<rect x="1017.5" y="641" width="4.5" height="863" fill="#217346" />
<rect x="1022" y="641" width="3" height="863" fill="#bcd8c8" />
<rect x="82" y="1500" width="940" height="4.5" fill="#217346" />
<rect x="82" y="641" width="5" height="863" fill="#217346" />
<rect x="88" y="723" width="930" height="783" fill="none" stroke="#ff0000" stroke-width="6" filter="url(#sh)"/>
<rect x="1493" y="106" width="484" height="72" fill="#c6c6c6" stroke="#a6a6a6" stroke-width="3"/>
<rect x="1505" y="121" width="41" height="36" fill="#fff" stroke="#9a9a9a" stroke-width="2"/><g stroke="#d0d0d0" stroke-width="2"><line x1="1505" y1="129.5" x2="1546" y2="129.5"/><line x1="1505" y1="138" x2="1546" y2="138"/><line x1="1505" y1="147.5" x2="1546" y2="147.5"/><line x1="1513" y1="121" x2="1513" y2="157"/><line x1="1531" y1="121" x2="1531" y2="157"/></g><rect x="1515" y="121" width="9" height="7" fill="#c0504d"/><rect x="1515" y="130" width="12" height="6.5" fill="#4a86c8"/><rect x="1515" y="139" width="8" height="6" fill="#e06a2c"/><rect x="1515" y="149" width="4.5" height="7" fill="#4a86c8"/><rect x="1525" y="142" width="24.5" height="21" fill="#fff" stroke="#8a8a8a" stroke-width="2.5"/><path d="M1533 156 L1541 148" stroke="#666" stroke-width="3"/><rect x="1530" y="152" width="5" height="5" fill="#888"/>
<text x="1559" y="156" font-size="39.2" fill="#444444" textLength="363" lengthAdjust="spacingAndGlyphs" >Conditional Formatting</text>
<path d="M1935 135 L1943.0 143 L1951 135" fill="none" stroke="#444" stroke-width="3"/>
<path d="M1495 176 L2019 176 Q2025 176 2025 182 L2025 955.5 Q2025 959.5 2021 959.5 L1499 959.5 Q1495 959.5 1495 955.5 Z" fill="#ffffff" stroke="#b9b9b9" stroke-width="4.5" filter="url(#sh2)"/>
<rect x="1492" y="117" width="480" height="58" fill="none" stroke="#ff0000" stroke-width="6" filter="url(#sh)"/>
<rect x="1511.2" y="191.7" width="84.89999999999995" height="84.1" fill="#fff" stroke="#a3a3a3" stroke-width="2.5"/>
<line x1="1532.698" y1="190.5" x2="1532.698" y2="277" stroke="#cfcfcf" stroke-width="3"/>
<line x1="1575.475" y1="190.5" x2="1575.475" y2="277" stroke="#cfcfcf" stroke-width="3"/>
<line x1="1510" y1="207.8" x2="1597.3" y2="207.8" stroke="#cfcfcf" stroke-width="3"/>
<line x1="1510" y1="225.1" x2="1597.3" y2="225.1" stroke="#cfcfcf" stroke-width="3"/>
<line x1="1510" y1="242.4" x2="1597.3" y2="242.4" stroke="#cfcfcf" stroke-width="3"/>
<line x1="1510" y1="259.7" x2="1597.3" y2="259.7" stroke="#cfcfcf" stroke-width="3"/>
<rect x="1532" y="208" width="45" height="18" fill="#f0c878" />
<rect x="1555.5" y="241" width="46" height="38" fill="#fff" stroke="#9e9e9e" stroke-width="2.5"/>
<g fill="none" stroke="#6a6a6a" stroke-width="2.2"><path d="M1575 246 L1563 253 L1575 259"/><line x1="1562" y1="264" x2="1575" y2="264"/><path d="M1582 262 L1593 268 L1582 274"/></g>
<text x="1617.2" y="254.8" font-size="37.8" fill="#1a1a1a" textLength="336.2" lengthAdjust="spacingAndGlyphs" font-weight="bold" >Highlight Cells Rules</text>
<rect x="1617" y="258" width="19" height="2.5" fill="#555" />
<path d="M1980.3 224.7 L1994.3 234.85 L1980.3 245 Z" fill="#1e1e1e"/>
<rect x="1511.2" y="303.2" width="84.89999999999995" height="84.1" fill="#fff" stroke="#a3a3a3" stroke-width="2.5"/>
<line x1="1532.698" y1="302" x2="1532.698" y2="388.5" stroke="#cfcfcf" stroke-width="3"/>
<line x1="1575.475" y1="302" x2="1575.475" y2="388.5" stroke="#cfcfcf" stroke-width="3"/>
<line x1="1510" y1="319.3" x2="1597.3" y2="319.3" stroke="#cfcfcf" stroke-width="3"/>
<line x1="1510" y1="336.6" x2="1597.3" y2="336.6" stroke="#cfcfcf" stroke-width="3"/>
<line x1="1510" y1="353.9" x2="1597.3" y2="353.9" stroke="#cfcfcf" stroke-width="3"/>
<line x1="1510" y1="371.2" x2="1597.3" y2="371.2" stroke="#cfcfcf" stroke-width="3"/>
<rect x="1532.5" y="304" width="42" height="47.5" fill="#f0c878" />
<g stroke="#5a5a5a" stroke-width="3" fill="none"><line x1="1552" y1="313" x2="1552" y2="347"/><path d="M1542 322 L1552 311 L1562 322"/></g>
<rect x="1555.5" y="352.5" width="46" height="38" fill="#fff" stroke="#9e9e9e" stroke-width="2.5"/>
<text x="1559" y="386" font-size="36" fill="#6a6a6a" textLength="38" lengthAdjust="spacingAndGlyphs" >10</text>
<text x="1617.2" y="365.6" font-size="37.8" fill="#1a1a1a" textLength="305.1" lengthAdjust="spacingAndGlyphs" font-weight="bold" >Top/Bottom Rules</text>
<rect x="1617" y="369" width="17" height="2.5" fill="#555" />
<path d="M1980.3 335.4 L1994.3 345.6 L1980.3 355.8 Z" fill="#1e1e1e"/>
<rect x="1629" y="401" width="392" height="2.5" fill="#e3e3e3" />
<rect x="1511.7" y="420.5" width="84.50000000000009" height="83.9" fill="#fff" stroke="#a3a3a3" stroke-width="2.5"/>
<line x1="1533.094" y1="419.3" x2="1533.094" y2="505.6" stroke="#cfcfcf" stroke-width="3"/>
<line x1="1575.6750000000002" y1="419.3" x2="1575.6750000000002" y2="505.6" stroke="#cfcfcf" stroke-width="3"/>
<line x1="1510.5" y1="436.56" x2="1597.4" y2="436.56" stroke="#cfcfcf" stroke-width="3"/>
<line x1="1510.5" y1="453.82" x2="1597.4" y2="453.82" stroke="#cfcfcf" stroke-width="3"/>
<line x1="1510.5" y1="471.08000000000004" x2="1597.4" y2="471.08000000000004" stroke="#cfcfcf" stroke-width="3"/>
<line x1="1510.5" y1="488.34000000000003" x2="1597.4" y2="488.34000000000003" stroke="#cfcfcf" stroke-width="3"/>
<rect x="1533" y="421.3" width="29" height="14" fill="#4a7ebb" />
<rect x="1565" y="426.3" width="7" height="3" fill="#9a9a9a" />
<rect x="1533" y="438.56" width="11.700000000000045" height="14" fill="#4a7ebb" />
<rect x="1565" y="443.56" width="7" height="3" fill="#9a9a9a" />
<rect x="1533" y="455.82" width="21" height="14" fill="#4a7ebb" />
<rect x="1565" y="460.82" width="7" height="3" fill="#9a9a9a" />
<rect x="1533" y="473.08" width="29" height="14" fill="#4a7ebb" />
<rect x="1565" y="478.08" width="7" height="3" fill="#9a9a9a" />
<rect x="1533" y="490.34000000000003" width="21" height="14" fill="#4a7ebb" />
<rect x="1565" y="495.34000000000003" width="7" height="3" fill="#9a9a9a" />
<text x="1618" y="483.5" font-size="37.8" fill="#1a1a1a" textLength="158.4" lengthAdjust="spacingAndGlyphs" font-weight="bold" >Data Bars</text>
<rect x="1618" y="487" width="26" height="2.5" fill="#555" />
<path d="M1980.5 453 L1994.5 463.5 L1980.5 474 Z" fill="#1e1e1e"/>
<rect x="1511.7" y="531.2" width="84.50000000000009" height="84.1" fill="#fff" stroke="#a3a3a3" stroke-width="2.5"/>
<line x1="1533.094" y1="530" x2="1533.094" y2="616.5" stroke="#cfcfcf" stroke-width="3"/>
<line x1="1575.6750000000002" y1="530" x2="1575.6750000000002" y2="616.5" stroke="#cfcfcf" stroke-width="3"/>
<line x1="1510.5" y1="547.3" x2="1597.4" y2="547.3" stroke="#cfcfcf" stroke-width="3"/>
<line x1="1510.5" y1="564.6" x2="1597.4" y2="564.6" stroke="#cfcfcf" stroke-width="3"/>
<line x1="1510.5" y1="581.9" x2="1597.4" y2="581.9" stroke="#cfcfcf" stroke-width="3"/>
<line x1="1510.5" y1="599.2" x2="1597.4" y2="599.2" stroke="#cfcfcf" stroke-width="3"/>
<rect x="1533" y="531.5" width="42" height="15.5" fill="#4a7ebb" />
<rect x="1555" y="538.0" width="15" height="3" fill="#6a6a6a" />
<rect x="1533" y="548.8" width="42" height="15.5" fill="#6aa88a" />
<rect x="1555" y="555.3" width="15" height="3" fill="#6a6a6a" />
<rect x="1533" y="566.1" width="42" height="15.5" fill="#f0c88a" />
<rect x="1555" y="572.6" width="15" height="3" fill="#6a6a6a" />
<rect x="1533" y="583.4" width="42" height="15.5" fill="#ee7f2d" />
<rect x="1555" y="589.9" width="15" height="3" fill="#6a6a6a" />
<rect x="1533" y="600.7" width="42" height="15.5" fill="#e05a3a" />
<rect x="1555" y="607.2" width="15" height="3" fill="#6a6a6a" />
<text x="1618" y="594" font-size="37.8" fill="#1a1a1a" textLength="193" lengthAdjust="spacingAndGlyphs" font-weight="bold" >Color Scales</text>
<rect x="1712" y="598" width="20" height="2.5" fill="#555" />
<path d="M1980.5 564.3 L1994.5 574.65 L1980.5 585 Z" fill="#1e1e1e"/>
<rect x="1511.7" y="642.5" width="84.50000000000009" height="82.90000000000006" fill="#fff" stroke="#a3a3a3" stroke-width="2.5"/>
<line x1="1533.094" y1="641.3" x2="1533.094" y2="726.6" stroke="#cfcfcf" stroke-width="3"/>
<line x1="1575.6750000000002" y1="641.3" x2="1575.6750000000002" y2="726.6" stroke="#cfcfcf" stroke-width="3"/>
<line x1="1510.5" y1="658.36" x2="1597.4" y2="658.36" stroke="#cfcfcf" stroke-width="3"/>
<line x1="1510.5" y1="675.42" x2="1597.4" y2="675.42" stroke="#cfcfcf" stroke-width="3"/>
<line x1="1510.5" y1="692.48" x2="1597.4" y2="692.48" stroke="#cfcfcf" stroke-width="3"/>
<line x1="1510.5" y1="709.54" x2="1597.4" y2="709.54" stroke="#cfcfcf" stroke-width="3"/>
<rect x="1541" y="647.3" width="6" height="6" fill="#3d9a70" />
<rect x="1555" y="649.3" width="17" height="3" fill="#b4b4b4" />
<rect x="1541" y="664.3599999999999" width="6" height="6" fill="#ee7f2d" />
<rect x="1555" y="666.3599999999999" width="17" height="3" fill="#b4b4b4" />
<rect x="1541" y="681.42" width="6" height="6" fill="#3d9a70" />
<rect x="1555" y="683.42" width="17" height="3" fill="#b4b4b4" />
<rect x="1541" y="698.4799999999999" width="6" height="6" fill="#ee7f2d" />
<rect x="1555" y="700.4799999999999" width="17" height="3" fill="#b4b4b4" />
<rect x="1541" y="715.54" width="6" height="6" fill="#3d9a70" />
<rect x="1555" y="717.54" width="17" height="3" fill="#b4b4b4" />
<text x="1618" y="704.8" font-size="37.8" fill="#1a1a1a" textLength="146" lengthAdjust="spacingAndGlyphs" font-weight="bold" >Icon Sets</text>
<rect x="1618" y="708.5" width="8" height="2.5" fill="#555" />
<path d="M1980.5 675.3 L1994.5 685.65 L1980.5 696 Z" fill="#1e1e1e"/>
<rect x="1500" y="739.5" width="522" height="2.5" fill="#e3e3e3" />
<rect x="1511" y="756.5" width="38.40000000000009" height="37.0" fill="#fff" stroke="#9e9e9e" stroke-width="2.2"/>
<line x1="1510" y1="765.25" x2="1550.4" y2="765.25" stroke="#d4d4d4" stroke-width="2"/>
<line x1="1510" y1="775.0" x2="1550.4" y2="775.0" stroke="#d4d4d4" stroke-width="2"/>
<line x1="1510" y1="784.75" x2="1550.4" y2="784.75" stroke="#d4d4d4" stroke-width="2"/>
<line x1="1518" y1="755.5" x2="1518" y2="794.5" stroke="#d4d4d4" stroke-width="2"/>
<line x1="1542.4" y1="755.5" x2="1542.4" y2="794.5" stroke="#d4d4d4" stroke-width="2"/>
<rect x="1519" y="762.5" width="22.40000000000009" height="9" fill="#f0c878" />
<text x="1590.7" y="793" font-size="38.8" fill="#3a3a3a" textLength="169.3" lengthAdjust="spacingAndGlyphs" >New Rule...</text>
<rect x="1591" y="796" width="25" height="2.5" fill="#555" />
<rect x="1495.7" y="741" width="347" height="68.7" fill="none" stroke="#ff0000" stroke-width="6" filter="url(#sh)"/>
<rect x="1511" y="826" width="38" height="39" fill="#fff" stroke="#9e9e9e" stroke-width="2.2"/>
<line x1="1510" y1="835.25" x2="1550" y2="835.25" stroke="#d4d4d4" stroke-width="2"/>
<line x1="1510" y1="845.5" x2="1550" y2="845.5" stroke="#d4d4d4" stroke-width="2"/>
<line x1="1510" y1="855.75" x2="1550" y2="855.75" stroke="#d4d4d4" stroke-width="2"/>
<line x1="1518" y1="825" x2="1518" y2="866" stroke="#d4d4d4" stroke-width="2"/>
<line x1="1542" y1="825" x2="1542" y2="866" stroke="#d4d4d4" stroke-width="2"/>
<rect x="1519" y="832" width="22" height="9" fill="#f0c878" />
<path d="M1536 866 L1552 850 L1558 856 L1542 872 Z" fill="#e8789a"/>
<text x="1590.7" y="863" font-size="37.2" fill="#3a3a3a" textLength="171.9" lengthAdjust="spacingAndGlyphs" >Clear Rules</text>
<rect x="1591" y="866" width="19" height="2.5" fill="#555" />
<path d="M1981.5 837.4 L1995.5 848.7 L1981.5 860 Z" fill="#1e1e1e"/>
<rect x="1508.5" y="893.5" width="38" height="38" fill="#e6e6e6" stroke="#a8a8a8" stroke-width="2.2"/>
<rect x="1514" y="899" width="40.799999999999955" height="38" fill="#fff" stroke="#9e9e9e" stroke-width="2.2"/>
<line x1="1513" y1="908.0" x2="1555.8" y2="908.0" stroke="#d4d4d4" stroke-width="2"/>
<line x1="1513" y1="918.0" x2="1555.8" y2="918.0" stroke="#d4d4d4" stroke-width="2"/>
<line x1="1513" y1="928.0" x2="1555.8" y2="928.0" stroke="#d4d4d4" stroke-width="2"/>
<line x1="1521" y1="898" x2="1521" y2="938" stroke="#d4d4d4" stroke-width="2"/>
<line x1="1547.8" y1="898" x2="1547.8" y2="938" stroke="#d4d4d4" stroke-width="2"/>
<rect x="1522" y="905" width="24.799999999999955" height="9" fill="#f0c878" />
<text x="1590.7" y="935.4" font-size="39.0" fill="#3a3a3a" textLength="240.3" lengthAdjust="spacingAndGlyphs" >Manage Rules...</text>
<rect x="1727" y="939" width="21" height="2.5" fill="#555" />
<circle cx="422.5" cy="633" r="42.7" fill="#8b0000"/>
<text x="422.5" y="650.8" font-size="51" fill="#ffffff" text-anchor="middle" >1</text>
<circle cx="256" cy="150" r="42.7" fill="#8b0000"/>
<text x="256" y="167.8" font-size="51" fill="#ffffff" text-anchor="middle" >2</text>
<circle cx="1414.5" cy="136" r="42.7" fill="#8b0000"/>
<text x="1414.5" y="153.8" font-size="51" fill="#ffffff" text-anchor="middle" >3</text>
<circle cx="1420.4" cy="768.1" r="42.7" fill="#8b0000"/>
<text x="1420.4" y="785.9" font-size="51" fill="#ffffff" text-anchor="middle" >4</text>
</svg></body></html>
